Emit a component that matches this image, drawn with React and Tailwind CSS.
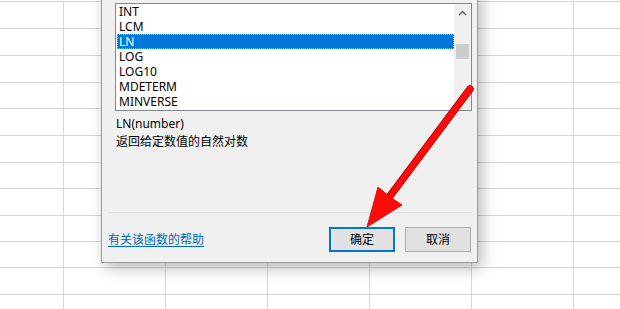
import React from 'react';

const rowHeights = [
  'h-[27px]', 'h-[27px]', 'h-[27px]', 'h-[26px]', 'h-[27px]', 'h-[27px]',
  'h-[26px]', 'h-[27px]', 'h-[26px]', 'h-[26px]', 'h-[27px]', 'h-[27px]',
];

const functions = ['INT', 'LCM', 'LN', 'LOG', 'LOG10', 'MDETERM', 'MINVERSE'];

const Sheet = () => (
  <div className="flex flex-col">
    <div className="h-[2px] border-b border-[#d6d6d6]" />
    {rowHeights.map((h, i) => (
      <div key={i} className={`${h} flex border-b border-[#d6d6d6]`}>
        <div className="w-[64px] shrink-0 border-r border-[#d6d6d6]" />
        <div className="w-[102px] shrink-0 border-r border-[#d6d6d6]" />
        <div className="w-[102px] shrink-0 border-r border-[#d6d6d6]" />
        <div className="w-[102px] shrink-0 border-r border-[#d6d6d6]" />
        <div className="w-[102px] shrink-0 border-r border-[#d6d6d6]" />
        <div className="w-[102px] shrink-0 border-r border-[#d6d6d6]" />
        <div className="flex-1" />
      </div>
    ))}
  </div>
);

const FunctionList = () => (
  <div className="flex h-[108px] w-[357px] border border-[#828790] bg-white">
    <div className="flex-1 overflow-hidden">
      {functions.map((f) => (
        <div
          key={f}
          className={
            f === 'LN'
              ? 'ml-px h-[15px] border border-dotted border-[#f0a060] bg-[#0078d7] pl-[1px] leading-[13px] text-white'
              : 'ml-px h-[15px] pl-[2px] leading-[15px] text-black'
          }
        >
          {f}
        </div>
      ))}
    </div>
    <div className="flex w-[17px] flex-col items-center bg-[#f0f0f0]">
      <svg width="9" height="6" viewBox="0 0 9 6" className="mt-[6px]">
        <path d="M1 5 L4.5 1.5 L8 5" fill="none" stroke="#606060" strokeWidth="1.3" />
      </svg>
      <div className="mt-[28px] h-[15px] w-[13px] bg-[#cdcdcd]" />
    </div>
  </div>
);

const Dialog = () => (
  <div className="absolute left-[101px] top-[-10px] flex h-[273px] w-[377px] flex-col border border-[#9a9a9a] bg-[#f0f0f0] pl-[13px] pr-[5px] pt-[12px] shadow-[4px_5px_14px_rgba(0,0,0,0.28)]">
    <FunctionList />
    <div className="mt-[5px] pl-px leading-[16px] text-black">LN(number)</div>
    <div className="mt-[2px] pl-px leading-[16px] text-black">返回给定数值的自然对数</div>
    <div className="flex-1" />
    <div className="-ml-[7px] mr-[0px] h-px w-[364px] bg-[#dcdcdc]" />
    <div className="flex items-center pb-[10px] pt-[14px]">
      <a className="-ml-[7px] text-[#0066cc] underline underline-offset-2">有关该函数的帮助</a>
      <div className="flex-1" />
      <div className="mr-[10px] flex h-[25px] w-[66px] items-center justify-center border border-[#0078d7] bg-[#e1e1e1] shadow-[inset_0_0_0_1px_#0078d7] text-black">
        确定
      </div>
      <div className="mr-[1px] flex h-[25px] w-[66px] items-center justify-center border border-[#adadad] bg-[#e1e1e1] text-black">
        取消
      </div>
    </div>
  </div>
);

const Arrow = () => (
  <svg className="pointer-events-none absolute left-0 top-0" width="620" height="309" viewBox="0 0 620 309">
    <line x1="470" y1="89" x2="390" y2="196" stroke="#b80000" strokeWidth="7.5" strokeLinecap="round" />
    <line x1="470" y1="89" x2="390" y2="196" stroke="#ff0a0a" strokeWidth="6" strokeLinecap="round" />
    <polygon points="367,227 378,187 389,196 402,205" fill="#ff0a0a" stroke="#d00000" strokeWidth="0.8" strokeLinejoin="round" />
  </svg>
);

export default function App() {
  return (
    <div
      className="relative h-[309px] w-[620px] overflow-hidden bg-white text-[12px]"
      style={{ fontFamily: '"Noto Sans", "Noto Sans CJK SC", sans-serif' }}
    >
      <Sheet />
      <Dialog />
      <Arrow />
    </div>
  );
}
